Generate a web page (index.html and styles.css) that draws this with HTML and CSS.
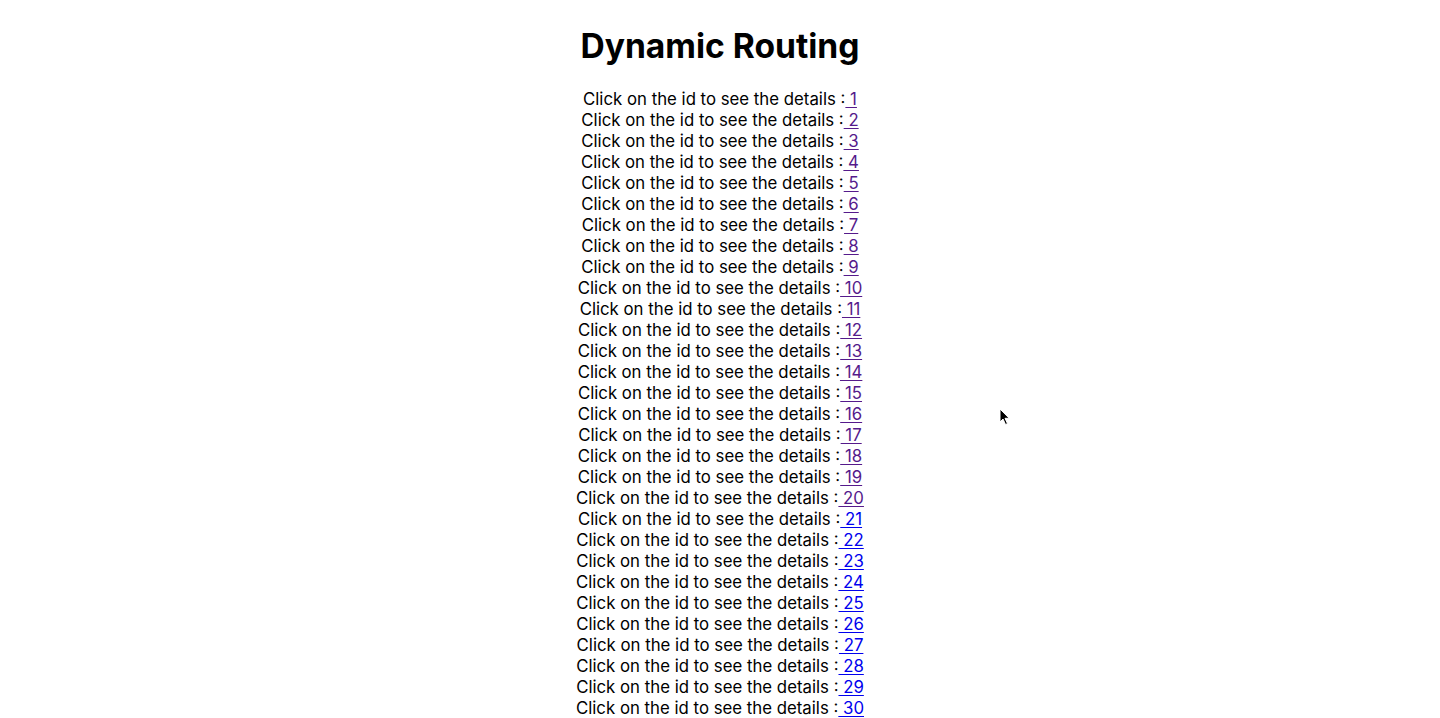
FILE: index.html
```html
<!DOCTYPE html>
<html lang="en">
<head>
<meta charset="utf-8">
<title>Dynamic Routing</title>
<link rel="stylesheet" href="styles.css">
</head>
<body>
<div class="app">
  <h1 class="title">Dynamic Routing</h1>
  <div class="list">
    <div class="row">Click on the id to see the details :<a class="id visited" href="#1"> 1</a></div>
    <div class="row">Click on the id to see the details :<a class="id visited" href="#2"> 2</a></div>
    <div class="row">Click on the id to see the details :<a class="id visited" href="#3"> 3</a></div>
    <div class="row">Click on the id to see the details :<a class="id visited" href="#4"> 4</a></div>
    <div class="row">Click on the id to see the details :<a class="id visited" href="#5"> 5</a></div>
    <div class="row">Click on the id to see the details :<a class="id visited" href="#6"> 6</a></div>
    <div class="row">Click on the id to see the details :<a class="id visited" href="#7"> 7</a></div>
    <div class="row">Click on the id to see the details :<a class="id visited" href="#8"> 8</a></div>
    <div class="row">Click on the id to see the details :<a class="id visited" href="#9"> 9</a></div>
    <div class="row">Click on the id to see the details :<a class="id visited" href="#10"> 10</a></div>
    <div class="row">Click on the id to see the details :<a class="id visited" href="#11"> 11</a></div>
    <div class="row">Click on the id to see the details :<a class="id visited" href="#12"> 12</a></div>
    <div class="row">Click on the id to see the details :<a class="id visited" href="#13"> 13</a></div>
    <div class="row">Click on the id to see the details :<a class="id visited" href="#14"> 14</a></div>
    <div class="row">Click on the id to see the details :<a class="id visited" href="#15"> 15</a></div>
    <div class="row">Click on the id to see the details :<a class="id visited" href="#16"> 16</a></div>
    <div class="row">Click on the id to see the details :<a class="id visited" href="#17"> 17</a></div>
    <div class="row">Click on the id to see the details :<a class="id visited" href="#18"> 18</a></div>
    <div class="row">Click on the id to see the details :<a class="id visited" href="#19"> 19</a></div>
    <div class="row">Click on the id to see the details :<a class="id visited" href="#20"> 20</a></div>
    <div class="row">Click on the id to see the details :<a class="id" href="#21"> 21</a></div>
    <div class="row">Click on the id to see the details :<a class="id" href="#22"> 22</a></div>
    <div class="row">Click on the id to see the details :<a class="id" href="#23"> 23</a></div>
    <div class="row">Click on the id to see the details :<a class="id" href="#24"> 24</a></div>
    <div class="row">Click on the id to see the details :<a class="id" href="#25"> 25</a></div>
    <div class="row">Click on the id to see the details :<a class="id" href="#26"> 26</a></div>
    <div class="row">Click on the id to see the details :<a class="id" href="#27"> 27</a></div>
    <div class="row">Click on the id to see the details :<a class="id" href="#28"> 28</a></div>
    <div class="row">Click on the id to see the details :<a class="id" href="#29"> 29</a></div>
    <div class="row">Click on the id to see the details :<a class="id" href="#30"> 30</a></div>
  </div>
</div>
<svg class="cursor" width="12" height="18" viewBox="0 0 12 18" aria-hidden="true">
  <path d="M1 1 L1 14 L4 11 L6.5 16.5 L8.5 15.6 L6 10.3 L10.2 10.3 Z" fill="#000" stroke="#fff" stroke-width="1"/>
</svg>
</body>
</html>
```

FILE: styles.css
```css
html, body {
  background: #ffffff;
}
body {
  margin: 8px;
  font-family: Inter, "Liberation Sans", Arial, sans-serif;
  color: #000000;
  overflow: hidden;
}
.app {
  display: flex;
  flex-direction: column;
  align-items: center;
  text-align: center;
}
.title {
  font-size: 33.6px;
  font-weight: 700;
  line-height: 37px;
  margin: 19px 0 25px;
}
.list {
  display: flex;
  flex-direction: column;
  align-items: center;
}
.row {
  font-size: 16.8px;
  line-height: 21px;
  white-space: pre;
}
.id {
  color: #0000ee;
  text-decoration: underline;
  text-underline-offset: 2px;
}
.id.visited {
  color: #551a8b;
}
.cursor {
  position: absolute;
  left: 999px;
  top: 408px;
}
```
